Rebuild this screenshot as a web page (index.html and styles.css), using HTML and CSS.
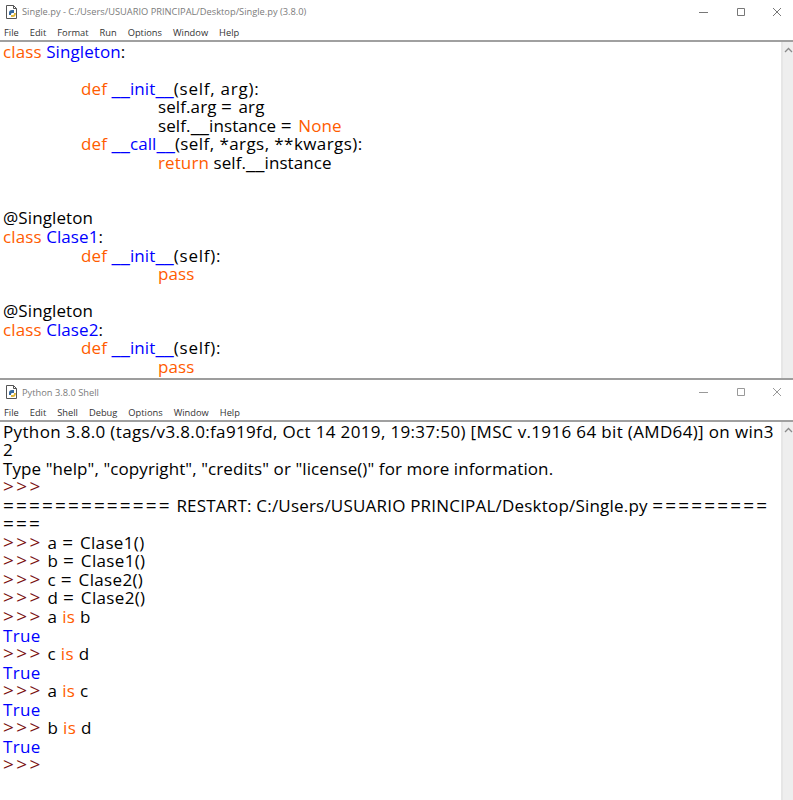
FILE: index.html
```html
<!DOCTYPE html>
<html>
<head>
  <meta name="viewport" content="width=device-width, initial-scale=1.0">
  <link rel="stylesheet" href="styles.css">
</head>
<body>
  <div class="window editor-window">
    <div class="titlebar">
      <svg class="app-icon" width="16" height="16" viewBox="0 0 16 16">
        <path d="M2.5 1.5h7l3 3v10h-10z" fill="#fff" stroke="#555"/>
        <path d="M9.5 1.5v3h3" fill="none" stroke="#555"/>
        <path d="M5 9c0-2 1-3 3-3h2v3H8c-1 0-1 1-1 2H5z" fill="#35689c"/>
        <path d="M12 9c0 2-1 4-3 4H7v-2h2c1 0 1-1 1-2z" fill="#e2b93a"/>
      </svg>
      <span class="title">Single.py - C:/Users/USUARIO PRINCIPAL/Desktop/Single.py (3.8.0)</span>
      <div class="win-buttons">
        <span class="win-btn"><svg width="10" height="10" viewBox="0 0 10 10"><path d="M0 5.5h9" stroke="#777"/></svg></span>
        <span class="win-btn"><svg width="10" height="10" viewBox="0 0 10 10"><path d="M1.5 1.5h7v7h-7z" fill="none" stroke="#777"/></svg></span>
        <span class="win-btn"><svg width="10" height="10" viewBox="0 0 10 10"><path d="M1 1l8 8M9 1l-8 8" stroke="#777"/></svg></span>
      </div>
    </div>
    <div class="menubar">
      <span>File</span><span>Edit</span><span>Format</span><span>Run</span><span>Options</span><span>Window</span><span>Help</span>
    </div>
    <div class="body">
      <div class="code">
        <div class="line"><span class="kw">class</span> <span class="def">Singleton</span>:</div>
        <div class="line"></div>
        <div class="line i1"><span class="kw">def</span> <span class="def"><span class="us">__</span>init<span class="us">__</span></span><span class="params">(self, arg):</span></div>
        <div class="line i2">self.arg <span class="eq">=</span> arg</div>
        <div class="line i2">self.<span class="us">__</span>instance <span class="eq">=</span> <span class="kw">None</span></div>
        <div class="line i1"><span class="kw">def</span> <span class="def"><span class="us">__</span>call<span class="us">__</span></span><span class="params-long">(self, *args, **kwargs):</span></div>
        <div class="line i2"><span class="kw">return</span> self.<span class="us">__</span>instance</div>
        <div class="line"></div>
        <div class="line"></div>
        <div class="line">@Singleton</div>
        <div class="line"><span class="kw">class</span> <span class="def">Clase1</span>:</div>
        <div class="line i1"><span class="kw">def</span> <span class="def"><span class="us">__</span>init<span class="us">__</span></span><span class="params">(self):</span></div>
        <div class="line i2"><span class="kw">pass</span></div>
        <div class="line"></div>
        <div class="line">@Singleton</div>
        <div class="line"><span class="kw">class</span> <span class="def">Clase2</span>:</div>
        <div class="line i1"><span class="kw">def</span> <span class="def"><span class="us">__</span>init<span class="us">__</span></span><span class="params">(self):</span></div>
        <div class="line i2"><span class="kw">pass</span></div>
      </div>
      <div class="scrollbar">
        <svg class="arrow" width="9" height="6" viewBox="0 0 9 6"><path d="M1 5l3.5-3.5L8 5" fill="none" stroke="#8a8a8a" stroke-width="1.3"/></svg>
      </div>
    </div>
  </div>

  <div class="window shell-window">
    <div class="titlebar">
      <svg class="app-icon" width="16" height="16" viewBox="0 0 16 16">
        <path d="M2.5 1.5h7l3 3v10h-10z" fill="#fff" stroke="#555"/>
        <path d="M9.5 1.5v3h3" fill="none" stroke="#555"/>
        <path d="M5 9c0-2 1-3 3-3h2v3H8c-1 0-1 1-1 2H5z" fill="#35689c"/>
        <path d="M12 9c0 2-1 4-3 4H7v-2h2c1 0 1-1 1-2z" fill="#e2b93a"/>
      </svg>
      <span class="title">Python 3.8.0 Shell</span>
      <div class="win-buttons">
        <span class="win-btn"><svg width="10" height="10" viewBox="0 0 10 10"><path d="M0 5.5h9" stroke="#999"/></svg></span>
        <span class="win-btn"><svg width="10" height="10" viewBox="0 0 10 10"><path d="M1.5 1.5h7v7h-7z" fill="none" stroke="#999"/></svg></span>
        <span class="win-btn"><svg width="10" height="10" viewBox="0 0 10 10"><path d="M1 1l8 8M9 1l-8 8" stroke="#999"/></svg></span>
      </div>
    </div>
    <div class="menubar">
      <span>File</span><span>Edit</span><span>Shell</span><span>Debug</span><span>Options</span><span>Window</span><span>Help</span>
    </div>
    <div class="body">
      <div class="code">
        <div class="line">Python 3.8.0 (tags/v3.8.0:fa919fd, Oct 14 2019, 19:37:50) [MSC v.1916 64 bit (AMD64)] on win3</div>
        <div class="line">2</div>
        <div class="line tight">Type "help", "copyright", "credits" or "license()" for more information.</div>
        <div class="line"><span class="prompt">&gt;&gt;&gt;</span></div>
        <div class="line restart"><span class="eq">=============</span> RESTART: C:/Users/USUARIO PRINCIPAL/Desktop/Single.py <span class="eq">=========</span></div>
        <div class="line"><span class="eq">===</span></div>
        <div class="line"><span class="prompt">&gt;&gt;&gt;</span> a <span class="eq">=</span> Clase1()</div>
        <div class="line"><span class="prompt">&gt;&gt;&gt;</span> b <span class="eq">=</span> Clase1()</div>
        <div class="line"><span class="prompt">&gt;&gt;&gt;</span> c <span class="eq">=</span> Clase2()</div>
        <div class="line"><span class="prompt">&gt;&gt;&gt;</span> d <span class="eq">=</span> Clase2()</div>
        <div class="line"><span class="prompt">&gt;&gt;&gt;</span> a <span class="kw">is</span> b</div>
        <div class="line out">True</div>
        <div class="line"><span class="prompt">&gt;&gt;&gt;</span> c <span class="kw">is</span> d</div>
        <div class="line out">True</div>
        <div class="line"><span class="prompt">&gt;&gt;&gt;</span> a <span class="kw">is</span> c</div>
        <div class="line out">True</div>
        <div class="line"><span class="prompt">&gt;&gt;&gt;</span> b <span class="kw">is</span> d</div>
        <div class="line out">True</div>
        <div class="line"><span class="prompt">&gt;&gt;&gt;</span></div>
      </div>
      <div class="scrollbar">
        <svg class="arrow" width="9" height="6" viewBox="0 0 9 6"><path d="M1 5l3.5-3.5L8 5" fill="none" stroke="#8a8a8a" stroke-width="1.3"/></svg>
      </div>
    </div>
  </div>
</body>
</html>
```

FILE: styles.css
```css
* {
  box-sizing: border-box;
}
body {
  margin: 0;
  background: #fff;
  font-family: 'Open Sans', 'Noto Sans', sans-serif;
  color: #000;
}
.window {
  display: flex;
  flex-direction: column;
  overflow: hidden;
}
.editor-window {
  height: 380px;
  border-bottom: 2px solid #9d9d9d;
}
.shell-window {
  height: 420px;
}
.titlebar {
  display: flex;
  align-items: center;
  height: 23px;
  padding-left: 4px;
}
.shell-window .titlebar {
  height: 24px;
}
.app-icon {
  flex: none;
  margin-right: 2px;
}
.title {
  font-size: 9.3px;
  color: #7b7b7b;
  white-space: nowrap;
}
.win-buttons {
  display: flex;
  gap: 4.5px;
  margin-left: auto;
}
.win-btn {
  display: flex;
  align-items: center;
  justify-content: center;
  width: 32px;
  height: 22px;
}
.menubar {
  display: flex;
  gap: 11px;
  align-items: center;
  height: 19px;
  padding: 1px 0 0 4px;
  font-size: 9.3px;
  color: #333;
  border-bottom: 2px solid #a0a0a0;
}
.shell-window .menubar {
  height: 18px;
  padding-top: 0;
}
.body {
  display: flex;
  flex: 1;
  min-height: 0;
}
.code {
  flex: 1;
  min-width: 0;
  padding: 0.5px 0 0 3px;
  font-size: 17px;
  letter-spacing: 0.1px;
  overflow: hidden;
}
.shell-window .code {
  letter-spacing: 0.35px;
}
.line {
  height: 18.55px;
  line-height: 18.55px;
  white-space: pre;
}
.i1 {
  padding-left: 78px;
}
.i2 {
  padding-left: 155px;
}
.params {
  letter-spacing: 0.75px;
}
.params-long {
  letter-spacing: 0.43px;
}
.shell-window .tight {
  letter-spacing: 0.09px;
}
.shell-window .restart {
  letter-spacing: 0.2px;
}
.kw {
  color: #ff5c00;
}
.def {
  color: #0000ff;
}
.out {
  color: #0000ff;
}
.prompt {
  color: #7a1010;
  font-size: 19px;
  line-height: 0;
  letter-spacing: 2.4px;
}
.eq {
  font-size: 19px;
  line-height: 0;
  letter-spacing: 2.12px;
}
.us {
  font-size: 21px;
  line-height: 0;
  letter-spacing: 0;
}
.scrollbar {
  flex: none;
  display: flex;
  justify-content: center;
  width: 12px;
  padding-top: 4px;
  background: #eeeeee;
  border-left: 2px solid #e6e6e6;
}
.arrow {
  margin-top: 1px;
}
```
